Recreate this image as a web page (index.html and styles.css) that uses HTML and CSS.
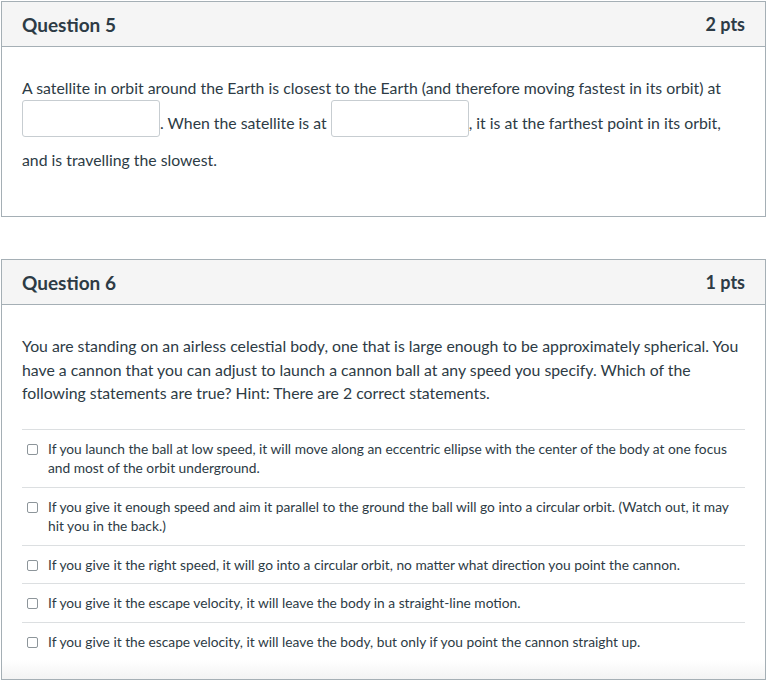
FILE: index.html
```html
<!DOCTYPE html>
<html lang="en">
<head>
    <meta charset="UTF-8">
    <meta name="viewport" content="width=device-width, initial-scale=1.0">
    <title>Quiz</title>
    <link rel="stylesheet" href="styles.css">
</head>
<body>
    <div class="quiz">
        <div class="question">
            <div class="question-header">
                <h2 class="question-name">Question 5</h2>
                <span class="question-points">2 pts</span>
            </div>
            <div class="question-text fill-blanks">
                A satellite in orbit around the Earth is closest to the Earth (and therefore moving fastest in its orbit) at
                <input class="blank" type="text" aria-label="Blank 1">. When the satellite is at
                <input class="blank" type="text" aria-label="Blank 2">, it is at the farthest point in its orbit, and is travelling the slowest.
            </div>
        </div>

        <div class="question">
            <div class="question-header">
                <h2 class="question-name">Question 6</h2>
                <span class="question-points">1 pts</span>
            </div>
            <div class="question-text">
                You are standing on an airless celestial body, one that is large enough to be approximately spherical. You have a cannon that you can adjust to launch a cannon ball at any speed you specify. Which of the following statements are true? Hint: There are 2 correct statements.
            </div>
            <div class="answers">
                <label class="answer">
                    <span class="checkbox"></span>
                    <span class="answer-text">If you launch the ball at low speed, it will move along an eccentric ellipse with the center of the body at one focus and most of the orbit underground.</span>
                </label>
                <label class="answer">
                    <span class="checkbox"></span>
                    <span class="answer-text">If you give it enough speed and aim it parallel to the ground the ball will go into a circular orbit. (Watch out, it may hit you in the back.)</span>
                </label>
                <label class="answer">
                    <span class="checkbox"></span>
                    <span class="answer-text">If you give it the right speed, it will go into a circular orbit, no matter what direction you point the cannon.</span>
                </label>
                <label class="answer">
                    <span class="checkbox"></span>
                    <span class="answer-text">If you give it the escape velocity, it will leave the body in a straight-line motion.</span>
                </label>
                <label class="answer">
                    <span class="checkbox"></span>
                    <span class="answer-text">If you give it the escape velocity, it will leave the body, but only if you point the cannon straight up.</span>
                </label>
            </div>
            <div class="question-footer"></div>
        </div>
    </div>
</body>
</html>
```

FILE: styles.css
```css
body {
    margin: 0;
    background-color: #fff;
    font-family: Lato, "Open Sans", sans-serif;
    color: #2d3b45;
}

.quiz {
    padding: 1px 0 0 1px;
}

.question {
    border: 1px solid #a5afb5;
    margin-bottom: 42px;
    background-color: #fff;
}

.question:last-child {
    margin-bottom: 0;
}

.question-header {
    display: flex;
    justify-content: space-between;
    align-items: center;
    height: 44px;
    padding: 0 20px;
    background-color: #f5f5f5;
    border-bottom: 1px solid #a5afb5;
}

.question-name,
.question-points {
    margin: 0;
    font-size: 19px;
    font-weight: bold;
    color: #2d3b45;
}

.question-points {
    font-size: 18px;
}

.question-text {
    padding: 29px 20px 0;
    font-size: 15.8px;
    line-height: 23.5px;
}

.fill-blanks {
    padding-bottom: 45px;
}

.blank {
    box-sizing: border-box;
    width: 138px;
    height: 37px;
    margin: 0 0 11px;
    padding: 0 8px;
    border: 1px solid #c7cdd1;
    border-radius: 3px;
    background-color: #fff;
    vertical-align: 4px;
    font-family: inherit;
    font-size: 15px;
}

.answers {
    margin: 24px 20px 0;
}

.answer {
    display: flex;
    align-items: flex-start;
    padding: 9px 0;
    border-top: 1px solid #dcdfe1;
    font-size: 13.75px;
    line-height: 19.5px;
}

.checkbox {
    flex: none;
    box-sizing: border-box;
    width: 11px;
    height: 11px;
    margin: 5px 10px 0 5px;
    border: 1px solid #8d959a;
    border-radius: 2px;
    background-color: #fff;
}

.question-footer {
    height: 19px;
    background: linear-gradient(to bottom, #fff, #f3f3f3);
}
```
